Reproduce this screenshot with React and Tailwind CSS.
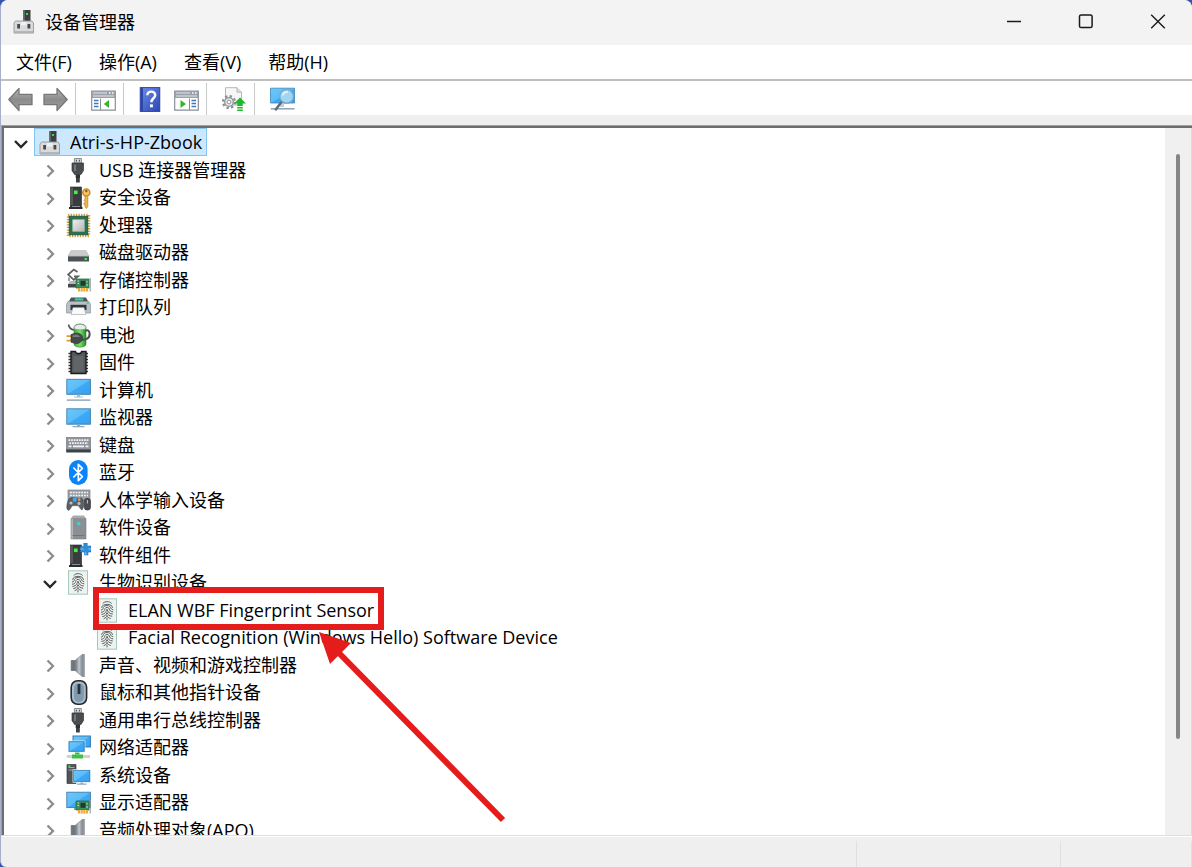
import { useState } from "react";

const MENUS = ["文件(F)", "操作(A)", "查看(V)", "帮助(H)"];

const DEVICES = [
  { level: 0, label: "Atri-s-HP-Zbook", icon: "root", open: true },
  { level: 1, label: "USB 连接器管理器", icon: "usb" },
  { level: 1, label: "安全设备", icon: "security" },
  { level: 1, label: "处理器", icon: "cpu" },
  { level: 1, label: "磁盘驱动器", icon: "disk" },
  { level: 1, label: "存储控制器", icon: "storage" },
  { level: 1, label: "打印队列", icon: "printer" },
  { level: 1, label: "电池", icon: "battery" },
  { level: 1, label: "固件", icon: "firmware" },
  { level: 1, label: "计算机", icon: "computer" },
  { level: 1, label: "监视器", icon: "monitor" },
  { level: 1, label: "键盘", icon: "keyboard" },
  { level: 1, label: "蓝牙", icon: "bluetooth" },
  { level: 1, label: "人体学输入设备", icon: "hid" },
  { level: 1, label: "软件设备", icon: "software" },
  { level: 1, label: "软件组件", icon: "component" },
  { level: 1, label: "生物识别设备", icon: "fingerprint", open: true },
  { level: 2, label: "ELAN WBF Fingerprint Sensor", icon: "fingerprint", leaf: true },
  { level: 2, label: "Facial Recognition (Windows Hello) Software Device", icon: "fingerprint", leaf: true },
  { level: 1, label: "声音、视频和游戏控制器", icon: "speaker" },
  { level: 1, label: "鼠标和其他指针设备", icon: "mouse" },
  { level: 1, label: "通用串行总线控制器", icon: "usb" },
  { level: 1, label: "网络适配器", icon: "network" },
  { level: 1, label: "系统设备", icon: "system" },
  { level: 1, label: "显示适配器", icon: "display" },
  { level: 1, label: "音频处理对象(APO)", icon: "speaker" },
];

const INDENT = ["pl-[3px]", "pl-8", "pl-[61px]"];

// gradients shared by every icon on the page
function Gradients() {
  return (
    <svg className="absolute w-0 h-0" aria-hidden="true">
      <defs>
        <linearGradient id="screen" x1="0" y1="0" x2="1" y2="1">
          <stop offset="0" stopColor="#6cc8fb" />
          <stop offset="0.5" stopColor="#5bbcf8" />
          <stop offset="0.52" stopColor="#3fa9f5" />
          <stop offset="1" stopColor="#35a0f2" />
        </linearGradient>
        <linearGradient id="silver" x1="0" y1="0" x2="1" y2="1">
          <stop offset="0" stopColor="#f2f2f2" />
          <stop offset="1" stopColor="#b4b4b4" />
        </linearGradient>
        <linearGradient id="steel" x1="0" y1="0" x2="1" y2="0">
          <stop offset="0" stopColor="#6f7780" />
          <stop offset="0.5" stopColor="#c3c9ce" />
          <stop offset="1" stopColor="#747c84" />
        </linearGradient>
        <linearGradient id="arrow" x1="0" y1="0" x2="0" y2="1">
          <stop offset="0" stopColor="#b5b5b5" />
          <stop offset="0.5" stopColor="#8c8c8c" />
          <stop offset="1" stopColor="#9d9d9d" />
        </linearGradient>
        <linearGradient id="help" x1="0" y1="0" x2="1" y2="1">
          <stop offset="0" stopColor="#6f8ee8" />
          <stop offset="1" stopColor="#2a45b4" />
        </linearGradient>
        <linearGradient id="cell" x1="0" y1="0" x2="1" y2="0">
          <stop offset="0" stopColor="#3fae3a" />
          <stop offset="0.5" stopColor="#7be06c" />
          <stop offset="1" stopColor="#1f8d22" />
        </linearGradient>
      </defs>
    </svg>
  );
}

function Fingerprint() {
  return (
    <>
      <rect x="2.5" y="0.8" width="19" height="23.4" fill="#eef3f1" stroke="#a3c8bc" />
      <g fill="none" stroke="#5a605e" strokeWidth="1" strokeLinecap="round">
        <path d="M8 5.2C10 3 14.4 3 16.4 5.2" />
        <path d="M6.6 9.4C7 5.2 17.2 5.2 17.6 9.4" />
        <path d="M6.4 12C8.2 12 8 10.6 8.4 9.4C9.4 6.8 15 7 15.8 9.8C16 10.8 16.4 11.4 17.8 11.6" />
        <path d="M6.4 14.2C9.6 14.2 9.4 12 10 10.6C10.6 9 13.6 9 14.2 10.8C14.6 12.6 15.4 13.6 17.8 13.8" />
        <path d="M6.8 16.4C11 16 10.8 13 12 11.2C12.8 13.8 14 15.8 17.4 16" />
        <path d="M7.6 18.6C10 18.2 11.4 16.8 12 14.6C12.8 16.8 14.4 18 16.8 18.2" />
        <path d="M9 20.6C10.6 20 11.6 19 12 17.4C12.6 19.2 13.8 20 15.4 20.4M12 20V22" />
      </g>
    </>
  );
}

function Tower() {
  return (
    <>
      <rect x="4.5" y="2" width="11" height="20" fill="#3a3d40" stroke="#222" strokeWidth="0.6" />
      <path d="M5 2.5H7V20H5Z" fill="#55595d" />
      <path d="M3 22H16.5V24H3Z" fill="#2b2e31" />
      <path d="M6 21H14V22H6Z" fill="#8b9094" />
      <rect x="8" y="5.5" width="3.6" height="3.6" fill="#3df53a" />
    </>
  );
}

function Card() {
  return (
    <>
      <path d="M10 11H23V20H10Z" fill="#3f8f5e" stroke="#2a6b44" strokeWidth="0.8" />
      <path d="M12 20H22V23.5H12Z" fill="#f0a92b" />
      <path d="M14.5 20V23.5M17 20V23.5M19.5 20V23.5" stroke="#fff" strokeWidth="0.6" />
      <rect x="14.5" y="12.8" width="5" height="5" fill="#1f3a2a" />
      <path d="M11.5 13H13M11.5 15.5H13M21 13V14.5M21 16V18" stroke="#b7e0c4" />
      <path d="M24.2 10V23.5" stroke="#8a9298" />
    </>
  );
}

const ICONS = {
  root: (
    <>
      <rect x="12" y="1" width="7.5" height="11.5" fill="#3c3f42" />
      <path d="M12 1H13.8V12H12Z" fill="#6a6e72" />
      <rect x="15" y="4" width="2" height="2" fill="#2fe23a" />
      <path d="M4.5 12H21L22.5 14V24H3V14Z" fill="#d9dadb" stroke="#94979a" strokeWidth="0.9" />
      <path d="M3.5 22.2H22V23.6H3.5Z" fill="#a7aaad" />
      <path d="M6.2 15H9V19.5H6.2ZM16.5 15H19.3V19.5H16.5Z" fill="#46494c" />
      <path d="M10 13H15.5V16.5H10Z" fill="#f0f0f0" />
    </>
  ),
  usb: (
    <>
      <path d="M8.4 0.5H15.4V5H8.4Z" fill="#d7d9da" stroke="#7f8386" strokeWidth="0.9" />
      <path d="M9.8 1.8H11V3.4H9.8ZM12.8 1.8H14V3.4H12.8Z" fill="#55585b" />
      <path d="M6 5H17.5V12.5L15 16.5H8.6L6 12.5Z" fill="#4a4d50" stroke="#303336" strokeWidth="0.7" />
      <path d="M8 6.5H10V13H8Z" fill="#74787b" />
      <path d="M9.7 16.5H14V20H9.7Z" fill="#2e3133" />
      <path d="M10 20H13.8V24.5H10Z" fill="#3d4043" />
    </>
  ),
  security: (
    <>
      <Tower />
      <circle cx="20.3" cy="7.5" r="3.6" fill="#f3c25c" stroke="#c5892a" strokeWidth="1.4" />
      <circle cx="20.3" cy="6" r="1.2" fill="#8a5a14" />
      <path d="M19 11H21.8V21.5L20.4 23.5L19 21.5V19.8L17.4 18.8L19 17.8V16.6L17.8 15.4L19 14.4Z" fill="#eeb548" stroke="#b98127" strokeWidth="0.7" />
    </>
  ),
  cpu: (
    <>
      <rect x="2.1" y="2.1" width="20.8" height="20.8" fill="none" stroke="#c9a13a" strokeWidth="2.6" strokeDasharray="1.3 1.3" />
      <rect x="3.2" y="3.2" width="18.6" height="18.6" fill="#2f6f50" stroke="#1f5039" strokeWidth="0.8" />
      <rect x="6.8" y="6.8" width="11.4" height="11.4" fill="url(#silver)" stroke="#a6cdb9" strokeWidth="0.8" />
    </>
  ),
  disk: (
    <>
      <path d="M5 10.5H20L23 16H2Z" fill="#c9cbcd" stroke="#b0b3b5" strokeWidth="0.5" />
      <path d="M2 16H23V21.5H2Z" fill="#4d5154" />
      <path d="M2 16H23V17H2Z" fill="#7c8083" />
      <rect x="18.5" y="18" width="2.5" height="2" fill="#35ee3c" />
    </>
  ),
  storage: (
    <>
      <path d="M11.5 4L7.8 1.6L2.2 6.6L7.8 11.8L12 8.4H8" fill="none" stroke="#5c6063" strokeWidth="1.8" />
      <path d="M3 9.5V13" stroke="#5c6063" strokeWidth="1.2" />
      <path d="M4 13H11V16H2Z" fill="#b5b8ba" />
      <path d="M2 16H10V19.5H2Z" fill="#45494c" />
      <Card />
    </>
  ),
  printer: (
    <>
      <path d="M5 2.5H20L22.5 7H2.5Z" fill="#4e5458" />
      <path d="M9 3.2H17L17.6 5.4H8.6Z" fill="#3cc7a4" />
      <path d="M2 6.5H23L24.6 9.5V18H0.5V9.5Z" fill="#b9c0c8" stroke="#8c949c" strokeWidth="0.7" />
      <path d="M4.5 9.8H20.5V15H4.5Z" fill="#31373c" />
      <path d="M7 12.6H18L20 19.5H5Z" fill="#fafafa" stroke="#9aa1a8" strokeWidth="0.6" />
      <rect x="20.6" y="7.6" width="2" height="1.4" fill="#2fe04a" />
    </>
  ),
  battery: (
    <>
      <path d="M2.5 1.5C3 4.5 5 6.5 8 7" fill="none" stroke="#55595c" strokeWidth="1.6" />
      <path d="M8 4.5C8 -0.2 20 -0.2 20 4.5V21C20 25.2 8 25.2 8 21Z" fill="url(#cell)" stroke="#2c7f2b" strokeWidth="0.6" />
      <path d="M8 5C8 0 20 0 20 5C20 7.5 8 7.5 8 5Z" fill="#e8ebee" stroke="#7a8085" strokeWidth="0.6" />
      <path d="M14 16C20 18 24 15 23.6 10.5C23.4 7.5 21.5 6.5 20 8" fill="none" stroke="#4b4f52" strokeWidth="2" />
      <path d="M0.5 12.2H6V14H0.5ZM0.5 16.8H6V18.6H0.5Z" fill="#d9a51e" />
      <path d="M5 11.5L10 10C15 10 17 13 16.5 15.5C16 19 13 20.8 9.6 20.6L5 19.2Z" fill="#45494c" stroke="#2b2e30" strokeWidth="0.6" />
      <path d="M6.5 12.5L10 11.4C12 11.6 13.4 12.6 14 14H6.5Z" fill="#777c80" />
    </>
  ),
  firmware: (
    <>
      <path d="M2.5 3.5H22M2.5 6.5H22M2.5 9.5H22M2.5 12.5H22M2.5 15.5H22M2.5 18.5H22M2.5 21.5H22" stroke="#333" strokeWidth="1.4" />
      <path d="M5 1.5H9.5C10 4.5 15 4.5 15.5 1.5H20V23.5H5Z" fill="#55585b" stroke="#1d1d1d" strokeWidth="1.4" />
      <path d="M7.5 6H17.5V21.5H7.5Z" fill="#626568" />
    </>
  ),
  computer: (
    <>
      <rect x="0.8" y="1.3" width="23.6" height="15" fill="url(#screen)" stroke="#3d7fae" strokeWidth="0.9" />
      <path d="M11 16.8H14V18.5H17V19.6H8V18.5H11Z" fill="#a8bdce" />
      <path d="M0.8 21.3H24.4V23H0.8Z" fill="#9db2c4" />
    </>
  ),
  monitor: (
    <>
      <rect x="0.8" y="3.8" width="23.6" height="15.4" fill="url(#screen)" stroke="#3d7fae" strokeWidth="0.9" />
      <path d="M11 19.6H14V21H18.5V22.3H6.5V21H11Z" fill="#8fa9bd" />
    </>
  ),
  keyboard: (
    <>
      <rect x="0.5" y="4.5" width="24" height="12.5" fill="#8f959a" stroke="#74797e" strokeWidth="0.7" />
      <path d="M0.2 16.5H24.8V19.5H0.2Z" fill="#3d4246" />
      <path d="M2.5 7.2H22.5M3.4 10.2H22" stroke="#f4f5f6" strokeWidth="1.8" strokeDasharray="1.7 0.9" />
      <path d="M2.5 13.4H5.5M7 13.4H18M19.5 13.4H22.5" stroke="#f4f5f6" strokeWidth="1.7" />
    </>
  ),
  bluetooth: (
    <>
      <rect x="3" y="0" width="18.6" height="25" rx="9.3" fill="#0a83fb" />
      <path d="M7.8 8L16.4 16.6L12.3 20.6V4.4L16.4 8.4L7.8 17" fill="none" stroke="#fff" strokeWidth="1.7" strokeLinejoin="round" strokeLinecap="round" />
    </>
  ),
  hid: (
    <>
      <rect x="2" y="2" width="22" height="11" fill="#9aa0a5" stroke="#7c8287" strokeWidth="0.7" />
      <path d="M4 4.5H22M4 7.5H22" stroke="#f5f6f7" strokeWidth="1.7" strokeDasharray="1.8 1" />
      <path d="M3.5 10.5C6 8.5 10 10.4 12 10.4C14 10.4 15 9 16.5 11C18 14 18 19 16.4 21.5C14.8 22.8 13.6 18.5 12.2 17.6H6.6C5 18.6 4 22.8 2 22.2C-0.2 20.8 1 13 3.5 10.5Z" fill="#5b6066" stroke="#3a3e42" strokeWidth="0.6" />
      <rect x="6.8" y="9.8" width="3.8" height="3.8" fill="#35aaf5" />
      <circle cx="5" cy="15" r="1.6" fill="#b9bec3" />
      <circle cx="13.2" cy="11.6" r="1.3" fill="#f0a04c" />
      <circle cx="13" cy="15.4" r="1.6" fill="#b9bec3" />
      <rect x="18.4" y="10.5" width="6" height="11.5" rx="2.6" fill="#4a4e52" stroke="#26292c" strokeWidth="0.7" />
      <path d="M21.4 12V15.5" stroke="#c5c9cc" />
    </>
  ),
  software: (
    <>
      <path d="M7 0.5H18L20 3.5H5Z" fill="#a7abaf" />
      <path d="M5 3.5H20V24H5Z" fill="#8b9095" stroke="#777c81" strokeWidth="0.6" />
      <path d="M5.3 3.8H7V23.7H5.3Z" fill="#b3b7bb" />
      <path d="M6.5 20H18.5V21H6.5Z" fill="#6f7479" />
      <circle cx="12.8" cy="8.6" r="1.8" fill="#3ad4d0" />
    </>
  ),
  component: (
    <>
      <Tower />
      <path d="M17.8 0H21.2V3H25V9H22V12H18.5V9H14.5V3.5H17.8Z" fill="#2f8fd8" stroke="#1e74b8" strokeWidth="0.6" />
      <path d="M14.5 6H17.5M19.8 12V9.5M25 6H22.5" stroke="#8cc8f2" />
    </>
  ),
  fingerprint: <Fingerprint />,
  speaker: (
    <>
      <path d="M5.2 7.5H9.5V17.5H5.2Z" fill="#6f777e" stroke="#565d63" strokeWidth="0.6" />
      <path d="M9.5 7L16.8 1V24L9.5 18Z" fill="url(#steel)" stroke="#7c848b" strokeWidth="0.6" />
      <path d="M16.8 1H18.8V24H16.8Z" fill="#8f979e" />
    </>
  ),
  mouse: (
    <>
      <rect x="5.2" y="0.8" width="15.4" height="23.4" rx="6.4" fill="#a9bccd" stroke="#26292c" strokeWidth="1.6" />
      <rect x="8" y="3.4" width="9.8" height="18.4" rx="4.2" fill="#8199ad" />
      <rect x="11.6" y="4" width="2.8" height="10" fill="#26313a" />
    </>
  ),
  network: (
    <>
      <rect x="7" y="1" width="17.4" height="11" fill="url(#screen)" stroke="#2f7db8" strokeWidth="1" />
      <rect x="2.3" y="6" width="16.6" height="11" fill="url(#screen)" stroke="#eef6fb" strokeWidth="0.9" />
      <rect x="3" y="6.7" width="15.2" height="9.6" fill="none" stroke="#2f7db8" strokeWidth="0.8" />
      <path d="M9 17.5H13.5V19.5H9Z" fill="#36b83c" />
      <path d="M0.8 20H24V23H0.8Z" fill="#cdd3d6" />
      <path d="M6 19.5H17V23.5H6Z" fill="#3cc143" />
    </>
  ),
  system: (
    <>
      <path d="M1 1.5H10V20.5H1Z" fill="#50555a" stroke="#33373a" strokeWidth="0.7" />
      <path d="M2.5 4.5H8.5M2.5 7H8.5" stroke="#9fa5aa" />
      <rect x="2.3" y="2.4" width="2" height="1.4" fill="#3cf046" />
      <rect x="7" y="6.8" width="17.4" height="12.4" fill="url(#screen)" stroke="#f2f7fb" strokeWidth="0.8" />
      <rect x="7.6" y="7.4" width="16.2" height="11.2" fill="none" stroke="#3d7fae" strokeWidth="0.7" />
      <path d="M14.5 19.4H17V20.6H20.5V21.8H11V20.6H14.5Z" fill="#8fa9bd" />
    </>
  ),
  display: (
    <>
      <rect x="0.8" y="2.2" width="23.6" height="15.4" fill="url(#screen)" stroke="#3d7fae" strokeWidth="0.9" />
      <path d="M8 18H10V20H8Z" fill="#8fa9bd" />
      <Card />
    </>
  ),
};

const TOOL_ICONS = {
  back: (
    <path d="M0.8 12.5L11 1.5V7.3H24V17.7H11V23.5Z" fill="url(#arrow)" stroke="#777" strokeWidth="1.3" strokeLinejoin="round" />
  ),
  forward: (
    <path d="M24.2 12.5L14 1.5V7.3H1V17.7H14V23.5Z" fill="url(#arrow)" stroke="#777" strokeWidth="1.3" strokeLinejoin="round" />
  ),
  tree: (
    <>
      <path d="M0.7 4H24.3V23.2H0.7Z" fill="#fff" stroke="#878e95" strokeWidth="1.2" />
      <path d="M0.7 4H24.3V11H0.7Z" fill="#9aa1a8" />
      <path d="M2 6H16M2 9H23" stroke="#e4e7ea" strokeWidth="1.1" />
      <path d="M18 6H19.5M21 6H22.5" stroke="#fff" strokeWidth="1.3" />
      <path d="M3 13.5H7.5M3 16.5H7.5M3 19.5H7.5" stroke="#3f79b8" strokeWidth="1.3" />
      <path d="M9.5 11.5V23" stroke="#878e95" />
      <path d="M18 13V21L12.8 17Z" fill="#35b52b" />
    </>
  ),
  help: (
    <>
      <rect x="1.2" y="0.6" width="19.6" height="23.8" fill="url(#help)" stroke="#263c94" strokeWidth="0.9" />
      <path d="M1.6 1H4V24H1.6Z" fill="#2d46a8" />
      <path d="M8.4 8.2C8.6 3.4 16.4 3.6 16.2 8.2C16.1 11.4 12.4 11.2 12.4 15.2" fill="none" stroke="#fff" strokeWidth="2.4" />
      <rect x="11" y="17.4" width="2.9" height="2.9" fill="#fff" />
    </>
  ),
  props: (
    <>
      <path d="M0.7 4H24.3V23.2H0.7Z" fill="#fff" stroke="#878e95" strokeWidth="1.2" />
      <path d="M0.7 4H24.3V11H0.7Z" fill="#9aa1a8" />
      <path d="M2 6H16M2 9H23" stroke="#e4e7ea" strokeWidth="1.1" />
      <path d="M18 6H19.5M21 6H22.5" stroke="#fff" strokeWidth="1.3" />
      <path d="M17.5 13.5H22M17.5 16.5H22M17.5 19.5H22" stroke="#3f79b8" strokeWidth="1.3" />
      <path d="M15.5 11.5V23" stroke="#878e95" />
      <path d="M6.5 13V21L12 17Z" fill="#35b52b" />
    </>
  ),
  scan: (
    <>
      <path d="M3.5 0.7H15L19.5 5.2V18H3.5Z" fill="#f7f7f7" stroke="#b4b7ba" />
      <path d="M15 0.7V5.2H19.5" fill="#dcdee0" stroke="#b4b7ba" />
      <circle cx="7" cy="15" r="6" fill="none" stroke="#8b8f93" strokeWidth="2.2" strokeDasharray="2.4 2.3" />
      <circle cx="7" cy="15" r="4.3" fill="#ececec" stroke="#8b8f93" strokeWidth="1.3" />
      <circle cx="7" cy="15" r="1.9" fill="#fff" stroke="#8b8f93" />
      <path d="M18 10.5L24 16.5H20.8V19.1H15.2V16.5H12Z" fill="#22b82b" />
      <path d="M15.2 20H20.8V21.4H15.2ZM15.2 22.4H20.8V24H15.2Z" fill="#22b82b" />
    </>
  ),
  search: (
    <>
      <path d="M0.5 1.2H24.5V16H0.5Z" fill="url(#screen)" stroke="#4a90bd" strokeWidth="0.9" />
      <path d="M10 16.4H14V20H10Z" fill="#c3ced6" />
      <path d="M0.8 21H24.5V22.6H0.8Z" fill="#94a9b8" />
      <path d="M11.8 14.5L5.2 23.2" stroke="#5b6b78" strokeWidth="2.4" />
      <circle cx="16.6" cy="9.4" r="6.8" fill="#a9dcfa" fillOpacity="0.9" stroke="#7fa6bf" strokeWidth="1.3" />
      <path d="M12.6 8.4C13.2 5.8 15.6 4.6 18 5" fill="none" stroke="#e9f7ff" strokeWidth="1.5" />
    </>
  ),
};

const TOOLBAR = [
  [["back", "后退"], ["forward", "前进"]],
  [["tree", "显示/隐藏控制台树"]],
  [["help", "帮助"], ["props", "显示/隐藏操作窗格"]],
  [["scan", "更新驱动程序"]],
  [["search", "扫描检测硬件改动"]],
];

function Icon({ children }) {
  return (
    <svg viewBox="0 0 25 25" className="w-[25px] h-[25px] shrink-0" aria-hidden="true">
      {children}
    </svg>
  );
}

function Chevron({ open }) {
  return open ? (
    <svg viewBox="0 0 14 14" className="w-3.5 h-3.5" fill="none" stroke="#262626" strokeWidth="2.4">
      <path d="M1 4L7 10L13 4" />
    </svg>
  ) : (
    <svg viewBox="0 0 14 14" className="w-3.5 h-3.5" fill="none" stroke="#8c8c8c" strokeWidth="2.3">
      <path d="M4.5 1.5L10 7L4.5 12.5" />
    </svg>
  );
}

function TitleBar() {
  return (
    <header className="flex items-center h-[45px] pb-0.5 shrink-0 pl-2.5 bg-[#f3f3f3]">
      <Icon>{ICONS.root}</Icon>
      <h1 className="flex-1 pl-[9px] text-[18px] leading-6">设备管理器</h1>
      <div className="flex gap-1 h-full">
        <button aria-label="最小化" className="w-[68px] flex items-center justify-center">
          <svg viewBox="0 0 16 16" className="w-4 h-4" stroke="#1a1a1a" strokeWidth="1.5">
            <path d="M1 7.5H15" />
          </svg>
        </button>
        <button aria-label="最大化" className="w-[68px] flex items-center justify-center">
          <svg viewBox="0 0 16 16" className="w-4 h-4" fill="none" stroke="#1a1a1a" strokeWidth="1.5">
            <rect x="1.5" y="1" width="12.6" height="12.6" rx="1.6" />
          </svg>
        </button>
        <button aria-label="关闭" className="w-[68px] flex items-center justify-center">
          <svg viewBox="0 0 16 16" className="w-4 h-4" stroke="#1a1a1a" strokeWidth="1.4">
            <path d="M1.2 0.8L14.8 14.2M14.8 0.8L1.2 14.2" />
          </svg>
        </button>
      </div>
    </header>
  );
}

function Toolbar() {
  return (
    <div role="toolbar" className="flex h-[34px] pt-0.5 shrink-0 bg-white">
      {TOOLBAR.map((group, i) => (
        <div
          key={i}
          className={`flex items-center gap-2.5 pr-[7px] ${i === 0 ? "pl-[7px]" : "pl-[15px]"} ${
            i < TOOLBAR.length - 1 ? "border-r border-[#c9c9c9]" : ""
          }`}
        >
          {group.map(([name, label]) => (
            <button key={name} aria-label={label} title={label}>
              <Icon>{TOOL_ICONS[name]}</Icon>
            </button>
          ))}
        </div>
      ))}
    </div>
  );
}

function TreeRow({ item, selected, onSelect }) {
  return (
    <li
      role="treeitem"
      aria-level={item.level + 1}
      aria-selected={selected}
      className={`flex h-7 even:h-[27px] ${INDENT[item.level]}`}
    >
      <span className="w-[27px] shrink-0 flex items-center justify-center pt-[3px]">
        {!item.leaf && (
          <button aria-label={`${item.open ? "折叠" : "展开"} ${item.label}`}>
            <Chevron open={item.open} />
          </button>
        )}
      </span>
      <button
        onClick={onSelect}
        className={`flex items-center gap-2 pl-0.5 pr-1 border ${
          selected ? "bg-[#cce8ff] border-[#86c3ee]" : "border-transparent"
        }`}
      >
        <span className="pt-px">
          <Icon>{ICONS[item.icon]}</Icon>
        </span>
        <span className="whitespace-nowrap leading-6">{item.label}</span>
      </button>
    </li>
  );
}

// red box and arrow pointing at the fingerprint sensor
function Callout() {
  return (
    <svg
      viewBox="0 0 480 720"
      className="absolute left-0 top-0 w-[480px] h-[720px] overflow-visible pointer-events-none"
      aria-hidden="true"
    >
      <rect x="92" y="462" width="285" height="37" fill="none" stroke="#e51c1c" strokeWidth="6" />
      <path d="M315 504L347 515L326 536Z" fill="#e51c1c" />
      <path d="M334 524L499 692" stroke="#e51c1c" strokeWidth="6" />
    </svg>
  );
}

export default function App() {
  const [selected, setSelected] = useState(0);

  return (
    <div className="h-screen bg-[#3553b5] text-[18px] text-black font-['Open_Sans','Noto_Sans_CJK_SC',sans-serif]">
      <Gradients />
      <div className="h-full flex flex-col overflow-hidden rounded-t-lg rounded-bl-md border-l border-[#a9aeca] bg-[#efefef]">
        <TitleBar />
        <nav className="flex items-center gap-[27px] h-9 shrink-0 pl-[15px] bg-white border-b-2 border-[#bfbfbf]">
          {MENUS.map((m) => (
            <button key={m} className="leading-6">
              {m}
            </button>
          ))}
        </nav>
        <Toolbar />

        <main className="flex-1 min-h-0 mt-2.5 flex border-t border-l border-b border-t-[#a0a0a0] border-l-[#a0a0a0] border-b-[#dedede]">
          <div className="flex-1 flex border-t-2 border-l-2 border-[#6d6d6d] bg-white">
            <div className="relative flex-1 overflow-hidden">
              <ul role="tree">
                {DEVICES.map((item, i) => (
                  <TreeRow key={i} item={item} selected={i === selected} onSelect={() => setSelected(i)} />
                ))}
              </ul>
              <Callout />
            </div>
            <div className="flex justify-center w-[27px] pt-[26px] pb-24 bg-[#f0f0f0] border-r border-[#dcdcdc]">
              <div className="w-1 rounded-full bg-[#868686]" />
            </div>
          </div>
        </main>

        <footer className="flex justify-end h-[31px] shrink-0 pt-1 border-t border-white">
          <div className="w-[204px] border-l border-[#e0e0e0]" />
          <div className="w-[132px] border-x border-[#e0e0e0]" />
        </footer>
      </div>
    </div>
  );
}
